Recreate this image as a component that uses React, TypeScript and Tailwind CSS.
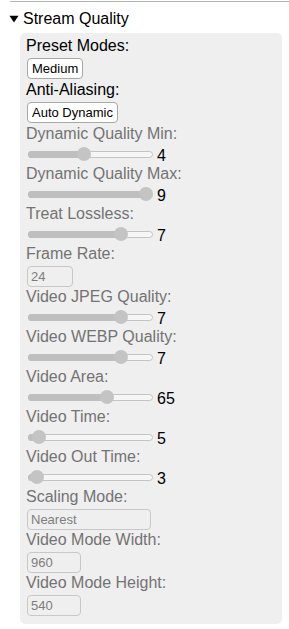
import type { ReactNode } from 'react'

type Item =
    | { kind: 'button'; label: string; value: string }
    | { kind: 'slider'; label: string; value: number; min: number; max: number }
    | { kind: 'input'; label: string; value: string; width: string }

const items: Item[] = [
    { kind: 'button', label: 'Preset Modes:', value: 'Medium' },
    { kind: 'button', label: 'Anti-Aliasing:', value: 'Auto Dynamic' },
    { kind: 'slider', label: 'Dynamic Quality Min:', value: 4, min: 0, max: 9 },
    { kind: 'slider', label: 'Dynamic Quality Max:', value: 9, min: 0, max: 9 },
    { kind: 'slider', label: 'Treat Lossless:', value: 7, min: 0, max: 9 },
    { kind: 'input', label: 'Frame Rate:', value: '24', width: 'w-[46px]' },
    { kind: 'slider', label: 'Video JPEG Quality:', value: 7, min: 0, max: 9 },
    { kind: 'slider', label: 'Video WEBP Quality:', value: 7, min: 0, max: 9 },
    { kind: 'slider', label: 'Video Area:', value: 65, min: 0, max: 100 },
    { kind: 'slider', label: 'Video Time:', value: 5, min: 1, max: 100 },
    { kind: 'slider', label: 'Video Out Time:', value: 3, min: 1, max: 100 },
    { kind: 'input', label: 'Scaling Mode:', value: 'Nearest', width: 'w-[124px]' },
    { kind: 'input', label: 'Video Mode Width:', value: '960', width: 'w-[54px]' },
    { kind: 'input', label: 'Video Mode Height:', value: '540', width: 'w-[54px]' },
]

const TRACK = 125
const THUMB = 14

function Slider({ value, min, max }: { value: number; min: number; max: number }) {
    const left = ((value - min) / (max - min)) * (TRACK - THUMB)
    return (
        <div className="flex items-start h-[22px] pl-[2px]">
            <div className="relative w-[125px] h-[22px]">
                <div className="absolute inset-x-0 top-[7.5px] h-[7px] rounded-full border border-[#c4c4c4] bg-[#f6f6f6]" />
                <div
                    className="absolute left-0 top-[7.5px] h-[7px] rounded-full bg-[#bfbfbf]"
                    style={{ width: left + THUMB / 2 }}
                />
                <div
                    className="absolute top-[4px] w-[14px] h-[14px] rounded-full bg-[#c4c4c4]"
                    style={{ left }}
                />
            </div>
            <span className="ml-[4px] mt-[4px] text-[16px] leading-[18px] text-black">{value}</span>
        </div>
    )
}

function Label({ children, enabled }: { children: ReactNode; enabled?: boolean }) {
    return (
        <div className={`text-[16px] leading-[18px] ${enabled ? 'text-black' : 'text-[#737373]'}`}>
            {children}
        </div>
    )
}

export default function App() {
    return (
        <div className="w-[289px] min-h-[629px] bg-white leading-[18px] font-['Liberation_Sans',Arial,sans-serif]">
            <div className="ml-[10px] mt-[1px] h-px bg-[#b4b4b4]" />

            {/* summary */}
            <div className="flex items-center h-[18px] mt-[8px] pl-[9px]">
                <svg width="10" height="8" viewBox="0 0 10 8" className="shrink-0">
                    <path d="M0.5 0.8 H9.5 L5 7.5 Z" fill="#000" />
                </svg>
                <span className="ml-[4px] text-[16px] leading-[18px] text-black">Stream Quality</span>
            </div>

            {/* panel */}
            <div className="ml-[20px] mt-[5px] w-[262px] rounded-[5px] bg-[#efefef] pl-[6px] pt-[4px] pb-[7px]">
                {items.map((item) => (
                    <div key={item.label}>
                        <Label enabled={item.kind === 'button'}>{item.label}</Label>
                        {item.kind === 'button' && (
                            <div className="flex pt-[3px] pb-[2px]">
                                <button className="ml-[1px] h-[21px] px-[4px] rounded-[4px] border border-[#a8a8a8] bg-white text-[13px] leading-[19px] text-black">
                                    {item.value}
                                </button>
                            </div>
                        )}
                        {item.kind === 'slider' && (
                            <Slider value={item.value} min={item.min} max={item.max} />
                        )}
                        {item.kind === 'input' && (
                            <div className="flex pt-[3px] pb-[1px]">
                                <input
                                    disabled
                                    readOnly
                                    value={item.value}
                                    className={`ml-[1px] block h-[21px] ${item.width} px-[3px] rounded-[4px] border border-[#c8c8c8] bg-[#efefef] text-[13px] text-[#7d7d7d]`}
                                />
                            </div>
                        )}
                    </div>
                ))}
            </div>
        </div>
    )
}
